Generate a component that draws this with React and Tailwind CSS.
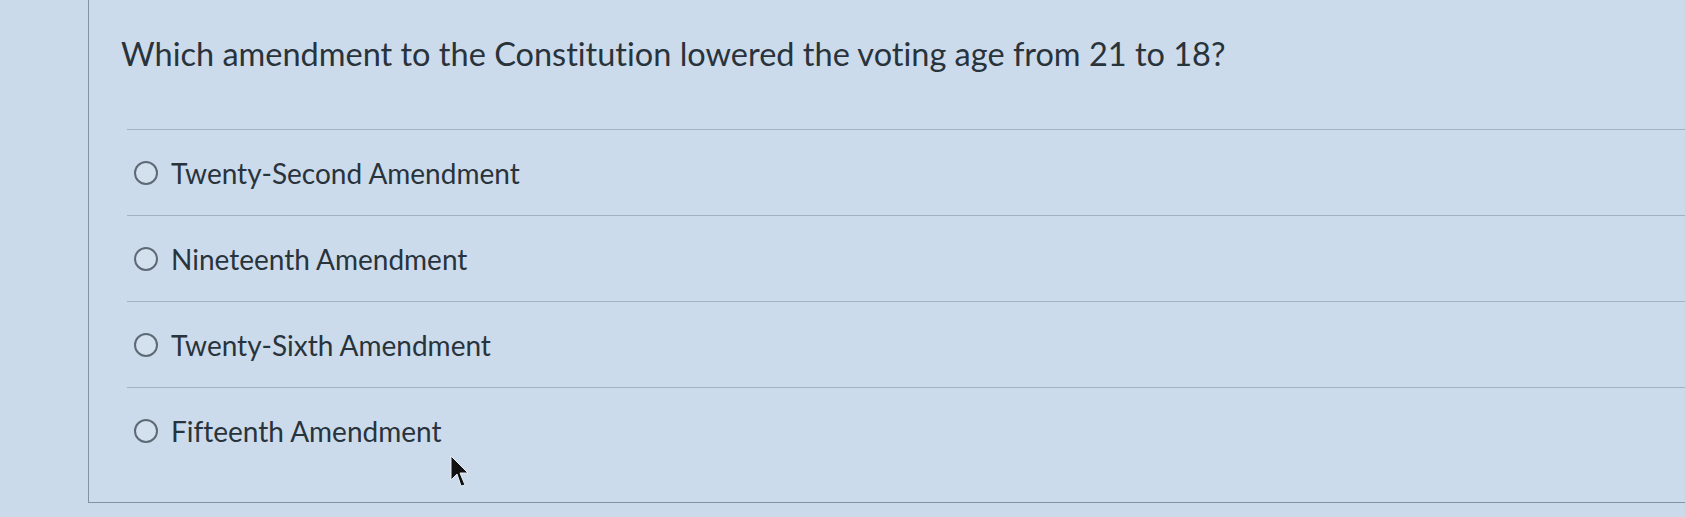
const options = [
  'Twenty-Second Amendment',
  'Nineteenth Amendment',
  'Twenty-Sixth Amendment',
  'Fifteenth Amendment',
];

export default function App() {
  return (
    <div className="w-[1685px] h-[517px] overflow-hidden bg-[#cbdaea] font-['Lato','Liberation_Sans',sans-serif] text-[#29333b] [font-variant-ligatures:none]">
      <div className="relative ml-[88px] h-[503px] border-l border-b border-[#8393a3] bg-[#ccdbeb]">
        <div className="pl-[32px] pt-[35px] text-[32.5px] leading-[38px]">
          Which amendment to the Constitution lowered the voting age from 21 to 18?
        </div>
        <div className="ml-[38px] mt-[56px]">
          {options.map((opt) => (
            <div key={opt} className="flex h-[86px] items-center border-t border-[#a3b2c2] pl-[7px]">
              <span className="h-[24px] w-[24px] shrink-0 rounded-full border-2 border-[#5d6a76] bg-[#d3e0ee]" />
              <span className="ml-[13px] text-[28px] leading-[34px]">{opt}</span>
            </div>
          ))}
        </div>
        {/* mouse pointer */}
        <svg className="absolute left-[361px] top-[455px]" width="20" height="34" viewBox="0 0 20 34">
          <path d="M1 1 L1 25 L7 19 L11 31 L15 30 L10 18 L18 18 Z" fill="#111" stroke="#e8eef5" strokeWidth="1" />
        </svg>
      </div>
    </div>
  );
}
